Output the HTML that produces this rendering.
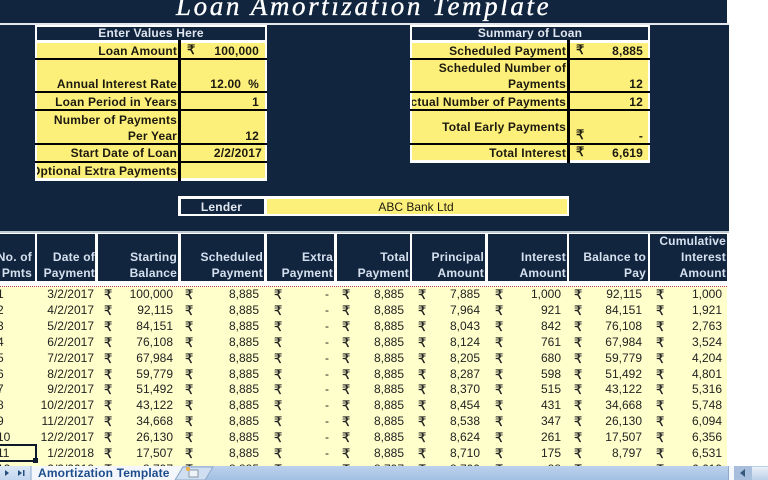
<!DOCTYPE html>
<html><head><meta charset="utf-8">
<style>
html,body{margin:0;padding:0;background:#fff}
#p{position:relative;width:768px;height:480px;overflow:hidden;background:#fff;font-family:"Liberation Sans",Arial,"DejaVu Sans",sans-serif;font-size:12px;color:#1a1a1a;filter:blur(.3px)}
#p div{position:absolute}
.y{background:#fdf07a}
.k{background:#000}
.w{background:#fff}
.n{background:#12253f}
.l{font-weight:bold;text-align:right;white-space:nowrap;line-height:16px;color:#1c1a10;overflow:hidden;letter-spacing:.17px}
.t{direction:rtl}
.q{font-family:"DejaVu Sans",sans-serif;font-size:13px;font-weight:normal;color:#1c1a10;-webkit-text-stroke:.4px #1c1a10;letter-spacing:0}
.h{font-weight:bold;text-align:right;white-space:nowrap;line-height:16px;color:#d5e0ee;letter-spacing:.2px}
.c{white-space:nowrap;line-height:15.9px;top:287px;text-align:right;color:#222}
.r{white-space:nowrap;line-height:15.9px;top:288px;color:#222;font-family:"DejaVu Sans",sans-serif;font-size:13px;-webkit-text-stroke:.25px #222}
</style></head><body><div id="p">
<div class="n" style="left:0;top:0;width:727px;height:23px"></div>
<div class="n" style="left:0;top:25px;width:729px;height:206px"></div>
<div style="left:0;top:23px;width:729px;height:2px;background:#e4e8ee"></div>
<div style="left:0;top:231px;width:729px;height:2px;background:#c2cad6"></div>
<div style="left:176px;top:-11px;font:italic 27px/34px 'Liberation Serif',serif;color:#fff;letter-spacing:2.6px;white-space:nowrap;-webkit-text-stroke:.35px #fff">Loan Amortization Template</div>

<!-- Enter values -->
<div class="w" style="left:35px;top:25px;width:232px;height:156px"></div>
<div class="n" style="left:37px;top:27px;width:228px;height:13px"></div>
<div class="h" style="left:37px;top:25px;width:228px;text-align:center;color:#dfe6f0">Enter Values Here</div>
<div class="y" style="left:37px;top:43px;width:228px;height:135px"></div>
<div class="k" style="left:35px;top:58px;width:232px;height:2px"></div>
<div class="k" style="left:35px;top:91px;width:232px;height:2px"></div>
<div class="k" style="left:35px;top:109px;width:232px;height:2px"></div>
<div class="k" style="left:35px;top:143px;width:232px;height:2px"></div>
<div class="k" style="left:35px;top:161px;width:232px;height:2px"></div>
<div class="k" style="left:178px;top:40px;width:3px;height:141px"></div>
<div class="l" style="left:37px;top:43px;width:140px">Loan Amount</div>
<div class="l" style="left:37px;top:76px;width:140px">Annual Interest Rate</div>
<div class="l" style="left:37px;top:94px;width:140px">Loan Period in Years</div>
<div class="l" style="left:37px;top:112px;width:140px">Number of Payments<br>Per Year</div>
<div class="l" style="left:37px;top:145px;width:140px">Start Date of Loan</div>
<div class="l t" style="left:37px;top:163px;width:140px">Optional Extra Payments</div>
<div class="l q" style="left:187px;top:43px;">₹</div>
<div class="l" style="left:190px;top:43px;width:69px">100,000</div>
<div class="l" style="left:190px;top:76px;width:69px">12.00&nbsp; %</div>
<div class="l" style="left:190px;top:94px;width:69px">1</div>
<div class="l" style="left:190px;top:128px;width:69px">12</div>
<div class="l" style="left:190px;top:145px;width:72px">2/2/2017</div>

<!-- Summary -->
<div class="w" style="left:410px;top:25px;width:240px;height:138px"></div>
<div class="n" style="left:412px;top:27px;width:236px;height:13px"></div>
<div class="h" style="left:412px;top:25px;width:236px;text-align:center;color:#dfe6f0">Summary of Loan</div>
<div class="y" style="left:412px;top:43px;width:236px;height:117px"></div>
<div class="k" style="left:410px;top:58px;width:240px;height:2px"></div>
<div class="k" style="left:410px;top:91px;width:240px;height:2px"></div>
<div class="k" style="left:410px;top:109px;width:240px;height:2px"></div>
<div class="k" style="left:410px;top:143px;width:240px;height:2px"></div>
<div class="k" style="left:567px;top:40px;width:3px;height:123px"></div>
<div class="l" style="left:412px;top:43px;width:154px">Scheduled Payment</div>
<div class="l" style="left:412px;top:60px;width:154px">Scheduled Number of<br>Payments</div>
<div class="l t" style="left:412px;top:94px;width:154px">Actual Number of Payments</div>
<div class="l" style="left:412px;top:119px;width:154px">Total Early Payments</div>
<div class="l" style="left:412px;top:145px;width:154px">Total Interest</div>
<div class="l q" style="left:576px;top:43px">₹</div>
<div class="l q" style="left:576px;top:128px">₹</div>
<div class="l q" style="left:576px;top:145px">₹</div>
<div class="l" style="left:580px;top:43px;width:63px">8,885</div>
<div class="l" style="left:580px;top:76px;width:63px">12</div>
<div class="l" style="left:580px;top:94px;width:63px">12</div>
<div class="l" style="left:580px;top:128px;width:63px">-</div>
<div class="l" style="left:580px;top:145px;width:63px">6,619</div>

<!-- Lender -->
<div class="w" style="left:178px;top:196px;width:391px;height:20px"></div>
<div class="n" style="left:181px;top:199px;width:83px;height:15px"></div>
<div class="y" style="left:267px;top:199px;width:300px;height:15px"></div>
<div class="h" style="left:181px;top:199px;width:81px;text-align:center;color:#e2e8f0">Lender</div>
<div style="left:267px;top:199px;width:298px;text-align:center;line-height:16px;color:#1c1a10">ABC Bank Ltd</div>

<!-- Header row -->
<div class="w" style="left:0;top:233px;width:727px;height:54px"></div>
<div class="n" style="left:0;top:234px;width:35px;height:47px"></div>
<div class="n" style="left:37px;top:234px;width:58px;height:47px"></div>
<div class="n" style="left:98px;top:234px;width:80px;height:47px"></div>
<div class="n" style="left:181px;top:234px;width:83px;height:47px"></div>
<div class="n" style="left:267px;top:234px;width:67px;height:47px"></div>
<div class="n" style="left:337px;top:234px;width:73px;height:47px"></div>
<div class="n" style="left:412px;top:234px;width:73px;height:47px"></div>
<div class="n" style="left:488px;top:234px;width:79px;height:47px"></div>
<div class="n" style="left:569px;top:234px;width:79px;height:47px"></div>
<div class="n" style="left:650px;top:234px;width:77px;height:47px"></div>
<div class="h" style="left:-30px;top:249px;width:62px">No. of<br>Pmts</div>
<div class="h" style="left:30px;top:249px;width:65px">Date of<br>Payment</div>
<div class="h" style="left:100px;top:249px;width:77px">Starting<br>Balance</div>
<div class="h" style="left:180px;top:249px;width:83px">Scheduled<br>Payment</div>
<div class="h" style="left:270px;top:249px;width:63px">Extra<br>Payment</div>
<div class="h" style="left:340px;top:249px;width:69px">Total<br>Payment</div>
<div class="h" style="left:414px;top:249px;width:70px">Principal<br>Amount</div>
<div class="h" style="left:490px;top:249px;width:76px">Interest<br>Amount</div>
<div class="h" style="left:571px;top:249px;width:75px">Balance to<br>Pay</div>
<div class="h" style="left:650px;top:233px;width:76px">Cumulative<br>Interest<br>Amount</div>
<div style="left:0;top:286px;width:727px;height:0;border-top:1px dotted #b8404a"></div>

<!-- Data -->
<div style="left:0;top:287px;width:727px;height:180px;background:#ffffcc"></div>
<div class="c" style="left:-3px;text-align:left">1<br>2<br>3<br>4<br>5<br>6<br>7<br>8<br>9<br>10<br>11<br>12</div>
<div class="c" style="left:30px;width:64px">3/2/2017<br>4/2/2017<br>5/2/2017<br>6/2/2017<br>7/2/2017<br>8/2/2017<br>9/2/2017<br>10/2/2017<br>11/2/2017<br>12/2/2017<br>1/2/2018<br>2/2/2018</div>
<div class="r" style="left:104px">₹<br>₹<br>₹<br>₹<br>₹<br>₹<br>₹<br>₹<br>₹<br>₹<br>₹<br>₹</div>
<div class="c" style="left:113px;width:60px">100,000<br>92,115<br>84,151<br>76,108<br>67,984<br>59,779<br>51,492<br>43,122<br>34,668<br>26,130<br>17,507<br>8,797</div>
<div class="r" style="left:185px">₹<br>₹<br>₹<br>₹<br>₹<br>₹<br>₹<br>₹<br>₹<br>₹<br>₹<br>₹</div>
<div class="c" style="left:199px;width:60px">8,885<br>8,885<br>8,885<br>8,885<br>8,885<br>8,885<br>8,885<br>8,885<br>8,885<br>8,885<br>8,885<br>8,885</div>
<div class="r" style="left:274px">₹<br>₹<br>₹<br>₹<br>₹<br>₹<br>₹<br>₹<br>₹<br>₹<br>₹<br>₹</div>
<div class="c" style="left:289px;width:40px">-<br>-<br>-<br>-<br>-<br>-<br>-<br>-<br>-<br>-<br>-<br>-</div>
<div class="r" style="left:342px">₹<br>₹<br>₹<br>₹<br>₹<br>₹<br>₹<br>₹<br>₹<br>₹<br>₹<br>₹</div>
<div class="c" style="left:344px;width:60px">8,885<br>8,885<br>8,885<br>8,885<br>8,885<br>8,885<br>8,885<br>8,885<br>8,885<br>8,885<br>8,885<br>8,797</div>
<div class="r" style="left:418px">₹<br>₹<br>₹<br>₹<br>₹<br>₹<br>₹<br>₹<br>₹<br>₹<br>₹<br>₹</div>
<div class="c" style="left:420px;width:60px">7,885<br>7,964<br>8,043<br>8,124<br>8,205<br>8,287<br>8,370<br>8,454<br>8,538<br>8,624<br>8,710<br>8,709</div>
<div class="r" style="left:495px">₹<br>₹<br>₹<br>₹<br>₹<br>₹<br>₹<br>₹<br>₹<br>₹<br>₹<br>₹</div>
<div class="c" style="left:501px;width:60px">1,000<br>921<br>842<br>761<br>680<br>598<br>515<br>431<br>347<br>261<br>175<br>88</div>
<div class="r" style="left:574px">₹<br>₹<br>₹<br>₹<br>₹<br>₹<br>₹<br>₹<br>₹<br>₹<br>₹<br>₹</div>
<div class="c" style="left:582px;width:60px">92,115<br>84,151<br>76,108<br>67,984<br>59,779<br>51,492<br>43,122<br>34,668<br>26,130<br>17,507<br>8,797<br>-</div>
<div class="r" style="left:656px">₹<br>₹<br>₹<br>₹<br>₹<br>₹<br>₹<br>₹<br>₹<br>₹<br>₹<br>₹</div>
<div class="c" style="left:662px;width:60px">1,000<br>1,921<br>2,763<br>3,524<br>4,204<br>4,801<br>5,316<br>5,748<br>6,094<br>6,356<br>6,531<br>6,619</div>
<div style="left:-2px;top:444px;width:35px;height:14px;border:2px solid #0c1a2c"></div>
<div style="left:33px;top:458px;width:5px;height:5px;background:#0c1a2c"></div>

<!-- Tab bar -->
<div style="left:0;top:466px;width:768px;height:14px;background:linear-gradient(#bcd2ec,#a2bfe2)"></div>
<div style="left:0;top:466px;width:31px;height:14px;background:linear-gradient(#dbe7f5,#c2d6ee)"></div>
<svg style="position:absolute;left:0;top:466px" width="230" height="14" viewBox="0 0 230 14">
<path d="M175 14L183 1h30l-8 13z" fill="#cfdef1" stroke="#8ea9ca"/>
<path d="M31 14L31 0h152l-8 14z" fill="#f3f7fc"/>
<path d="M31 14V0M175 14L183 1" stroke="#8ea9ca" fill="none"/>
<path d="M5 4l4 3-4 3zM18 4l4 3-4 3zM23 4h1.500v6H23z" fill="#264f80"/>
<rect x="189" y="4" width="9" height="7" fill="#eef3f8" stroke="#8a98a8"/>
<circle cx="188" cy="3" r="2" fill="#f0b040"/>
</svg>
<div style="left:38px;top:466px;font-weight:bold;line-height:15px;color:#1d4c8c;white-space:nowrap;letter-spacing:.15px">Amortization Template</div>
<div style="left:728px;top:466px;width:5px;height:14px;background:#f4f7fb;border-left:1px solid #8ea9ca"></div>
<div style="left:734px;top:466px;width:18px;height:14px;background:#a7bfdc"></div>
<svg style="position:absolute;left:737px;top:466px" width="12" height="14"><path d="M8 3L3 7l5 4z" fill="#35597f"/></svg>
<div style="left:752px;top:467px;width:16px;height:13px;background:linear-gradient(#eaf0f7,#bcd0e8)"></div>
</div></body></html>
